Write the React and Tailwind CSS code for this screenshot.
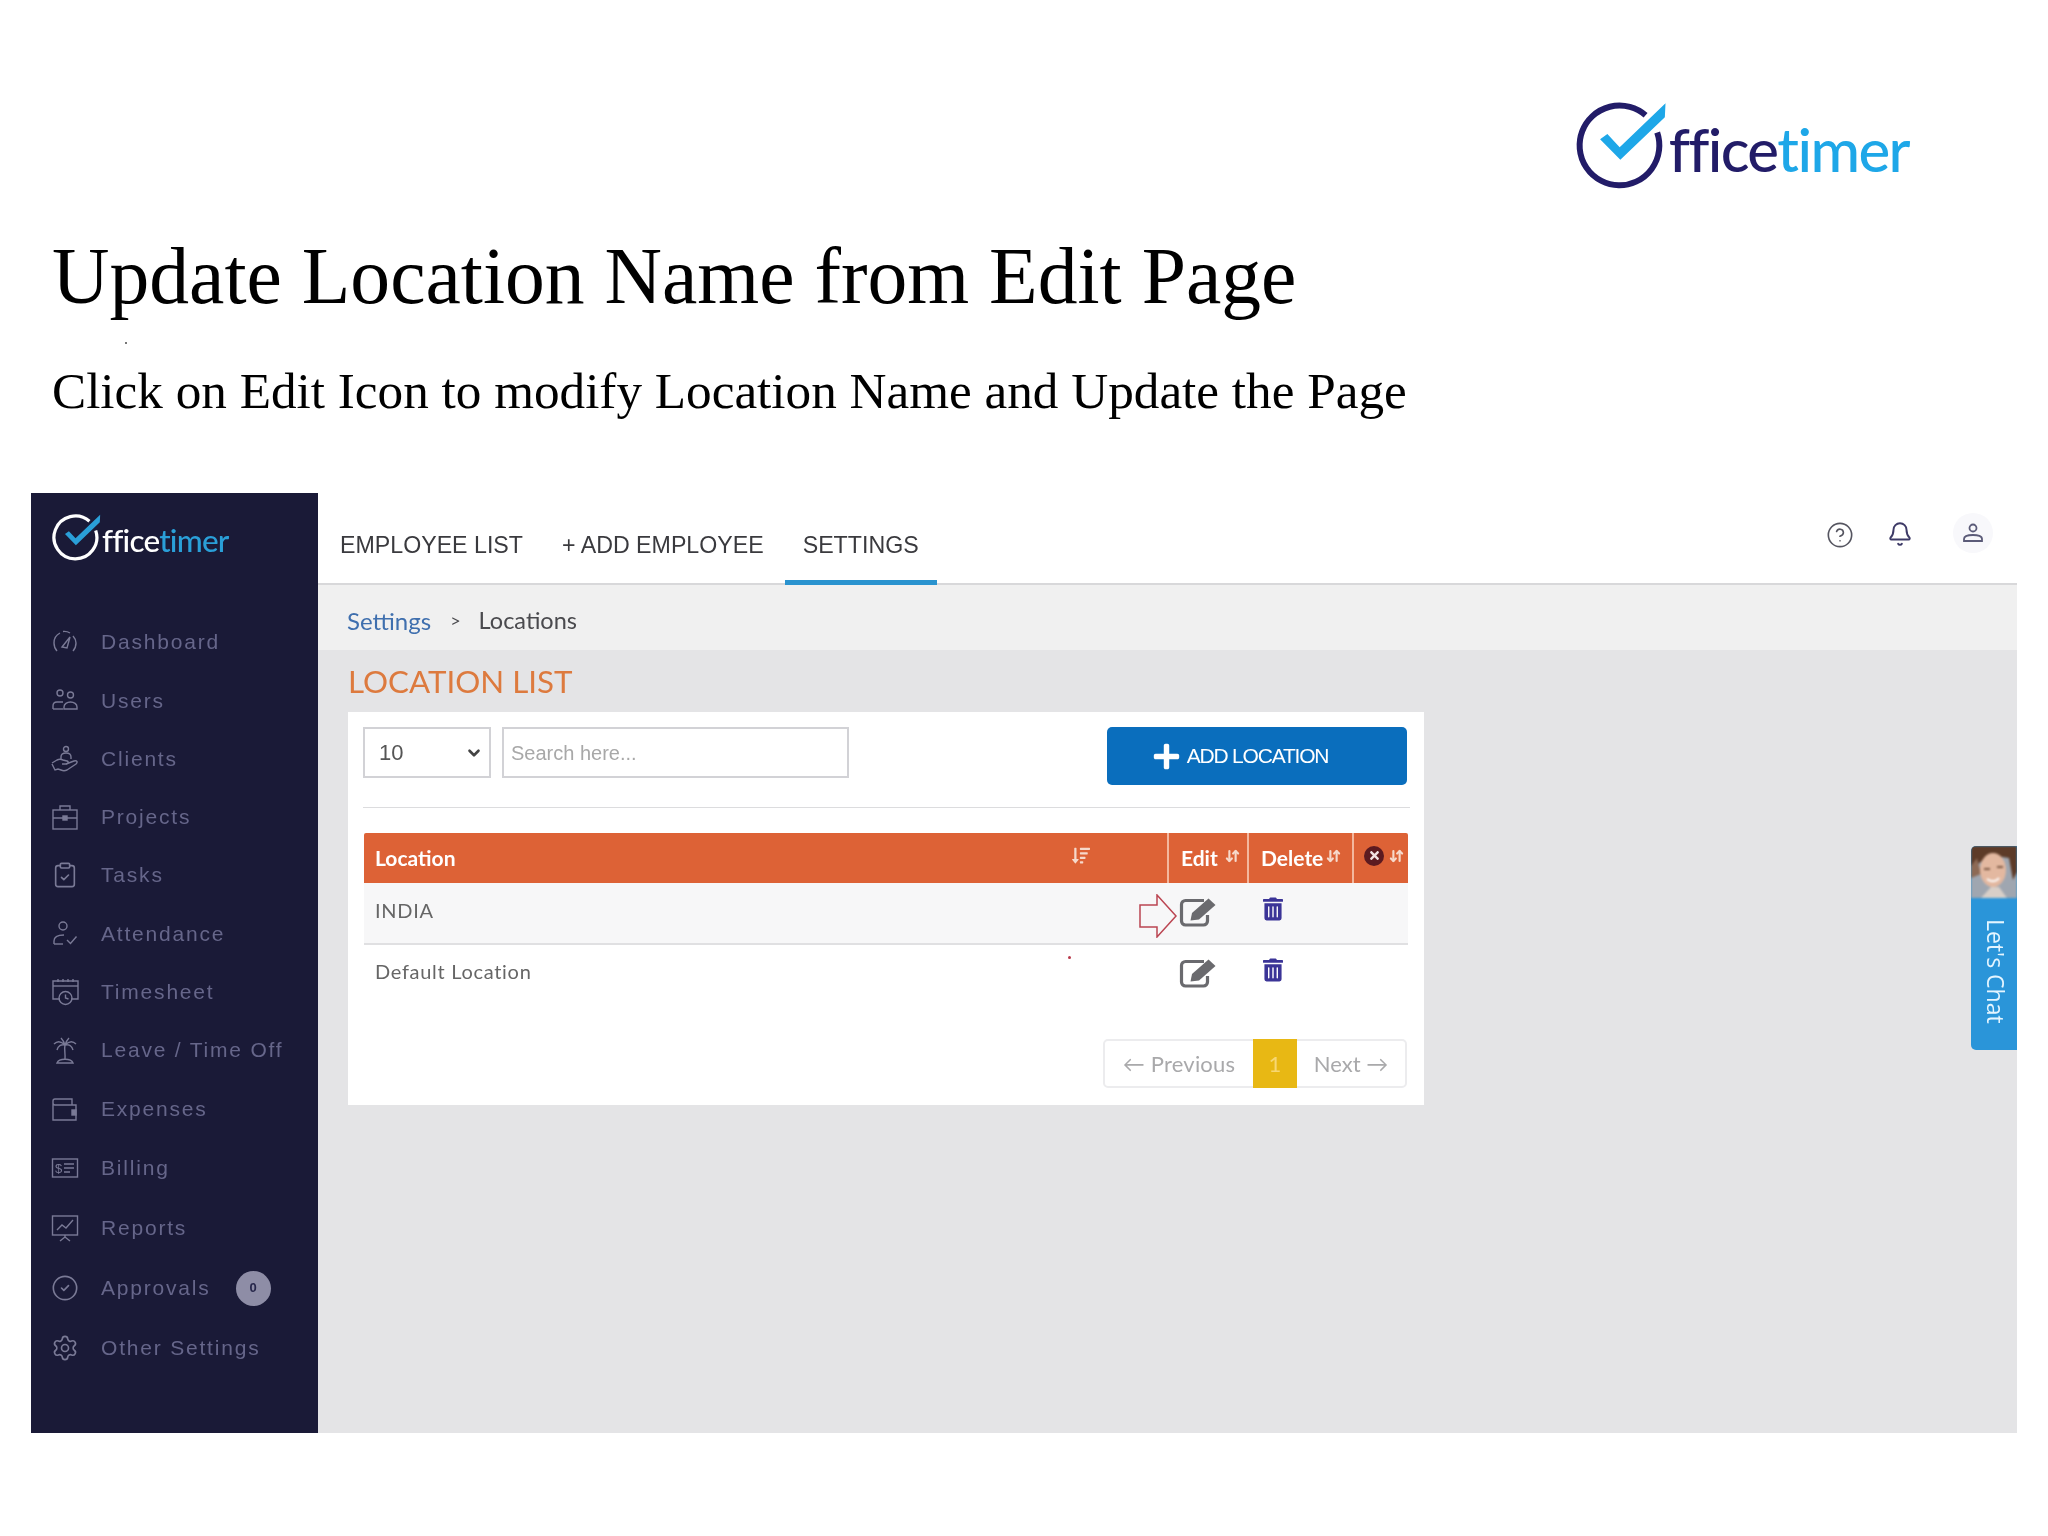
import { ArrowDownUp, Bell, ChevronDown, CircleCheck, CircleHelp, ClipboardCheck, Settings } from 'lucide-react'
import { FaPlus, FaSortAmountDown, FaTimes, FaTrashAlt } from 'react-icons/fa'

const LogoMark = ({ className, ring, tick }) => (
  <svg viewBox="225 120 285 280" className={className} fill="none">
    <path d="M440 166 A120 120 0 1 0 475 218" stroke={ring} strokeWidth="18" />
    <path d="M303 238 L325 222 L362 262 L500 130 L498 172 L364 300 Z" fill={tick} />
  </svg>
)

const NavSvg = ({ children }) => (
  <svg viewBox="0 0 28 28" className="w-7 h-7" fill="none" stroke="currentColor" strokeWidth="1.4">
    {children}
  </svg>
)

const GaugeIcon = () => (
  <NavSvg>
    <path d="M6 23A12 12 0 0 1 3 15 11 11 0 0 1 9 5" />
    <path d="M12 3.500A11 11 0 0 1 19 5" />
    <path d="M22 8a11 11 0 0 1 3 7 12 12 0 0 1-3 8" />
    <path d="M11 19L19 9 16 20z" />
  </NavSvg>
)

const UsersIcon = () => (
  <NavSvg>
    <circle cx="9" cy="7" r="3" />
    <circle cx="19.500" cy="9" r="3" />
    <path d="M2 23v-3c0-3 2-4 4-4h6" />
    <path d="M2 23h10" />
    <path d="M13 23v-2c0-3 3-5 6.500-5s6.500 2 6.500 5v2z" />
  </NavSvg>
)

const ClientsIcon = () => (
  <NavSvg>
    <circle cx="15" cy="4" r="2.500" />
    <path d="M10 14v-2c0-3 2-4 5-4s5 1 5 4v2" />
    <path d="M1 18l5-3c2-1 4-1 6 0l4 1c2 .5 1.500 3-1 3h-4" />
    <path d="M15 19l8-3c3-1 4 1 2 3l-9 6c-2 1-4 1-6 0l-3-1-3 1-3-6" />
  </NavSvg>
)

const ProjectsIcon = () => (
  <NavSvg>
    <rect x="2" y="7" width="24" height="19" />
    <path d="M9 7V3h10v4M2 15h24" />
    <rect x="12" y="13" width="4" height="4" fill="currentColor" />
  </NavSvg>
)

const AttendanceIcon = () => (
  <NavSvg>
    <circle cx="12" cy="7" r="4" />
    <path d="M3 25v-3c0-4 4-6 10-6" />
    <path d="M3 25h9" />
    <path d="M16 21l3.500 3.500 6-7" />
  </NavSvg>
)

const TimesheetIcon = () => (
  <NavSvg>
    <path d="M9 21H2V3h25v18h-7" />
    <path d="M2 8h25" />
    <path d="M7 1v3M12 1v3M17 1v3M22 1v3" />
    <circle cx="14.500" cy="20" r="6.500" />
    <path d="M14.500 16.500V20l3 1" />
  </NavSvg>
)

const PalmIcon = () => (
  <NavSvg>
    <path d="M14 23c.5-5-1-10 0-14" />
    <path d="M14 9C10 5 6 5 3 8M14 9c4-4 8-4 11-1M14 9c-4-1-7 1-8 5M14 9c4-1 7 1 8 5M14 9c-1-3-2-5-4-7M14 9c1-3 2-5 4-7" />
    <path d="M6 27c2-5 14-5 16 0z" />
  </NavSvg>
)

const WalletIcon = () => (
  <NavSvg>
    <path d="M2 6a2 2 0 0 1 2-2h17v6" />
    <path d="M2 6v19h23v-15H4a2 2 0 0 1-2-2" />
    <rect x="21" y="15" width="4" height="5" fill="currentColor" />
  </NavSvg>
)

const BillingIcon = () => (
  <NavSvg>
    <rect x="1.500" y="5" width="25" height="18" />
    <path d="M13 10h10M13 14h10M13 18h6" />
    <text x="4" y="19" fontSize="13" fill="currentColor" stroke="none" fontFamily="Liberation Sans">$</text>
  </NavSvg>
)

const ReportsIcon = () => (
  <NavSvg>
    <rect x="1.500" y="2" width="25" height="19" />
    <path d="M6 16l5-5 4 3 7-8" />
    <path d="M14 21v2M14 23l-5 4M14 23l5 4" />
  </NavSvg>
)

const navItems = [
  { label: 'Dashboard', icon: <GaugeIcon />, row: 'h-[58.25px]' },
  { label: 'Users', icon: <UsersIcon />, row: 'h-[58.25px]' },
  { label: 'Clients', icon: <ClientsIcon />, row: 'h-[58.25px]' },
  { label: 'Projects', icon: <ProjectsIcon />, row: 'h-[58.25px]' },
  { label: 'Tasks', icon: <ClipboardCheck className="w-7 h-7" strokeWidth={1.4} />, row: 'h-[58.25px]' },
  { label: 'Attendance', icon: <AttendanceIcon />, row: 'h-[58.25px]' },
  { label: 'Timesheet', icon: <TimesheetIcon />, row: 'h-[58.25px]' },
  { label: 'Leave / Time Off', icon: <PalmIcon />, row: 'h-[58.25px]' },
  { label: 'Expenses', icon: <WalletIcon />, row: 'h-[59px]' },
  { label: 'Billing', icon: <BillingIcon />, row: 'h-[60px]' },
  { label: 'Reports', icon: <ReportsIcon />, row: 'h-[60px]' },
  { label: 'Approvals', icon: <CircleCheck className="w-7 h-7" strokeWidth={1.4} />, row: 'h-[60px]', badge: '0' },
  { label: 'Other Settings', icon: <Settings className="w-7 h-7" strokeWidth={1.4} />, row: 'h-[60px]' },
]

const tabs = [
  { label: 'EMPLOYEE LIST' },
  { label: '+ ADD EMPLOYEE' },
  { label: 'SETTINGS', active: true },
]

const rows = ['INDIA', 'Default Location']

function SortArrows() {
  return <ArrowDownUp className="w-[15px] h-[18px] text-[#f6d9cb]" strokeWidth={3.4} />
}

function EditIcon() {
  return (
    <svg viewBox="0 0 38 30" className="w-[38px] h-[30px] text-[#6a6a6e]" fill="none">
      <path d="M25 3.500H6.500a4 4 0 0 0-4 4v16.500a4 4 0 0 0 4 4h18a4 4 0 0 0 4-4v-6" stroke="currentColor" strokeWidth="3.200" />
      <path d="M11.500 23.500L13 16 29.500 1.500l7 6.500L20 22.500z" fill="currentColor" />
    </svg>
  )
}

function Sidebar() {
  return (
    <aside className="w-[287px] shrink-0 bg-[#1a1a37]">
      <div className="h-[120px] pl-[20px] pt-[20px] flex items-start">
        <LogoMark className="w-[51px] h-[50px] shrink-0" ring="#ffffff" tick="#2a9fd8" />
        <span className="mt-[2px] font-['Lato',sans-serif] text-[31.5px] leading-[50px] tracking-[-0.8px] font-medium text-white">
          ffice<span className="text-[#2a9fd8]">timer</span>
        </span>
      </div>
      <nav className="flex flex-col">
        {navItems.map(item => (
          <div key={item.label} className={`${item.row} pl-[20px] flex items-center gap-[22px] text-[#7a7a96]`}>
            <span className="shrink-0">{item.icon}</span>
            <span className="font-['Liberation_Sans',sans-serif] text-[21px] tracking-[1.8px] text-[#66668a]">{item.label}</span>
            {item.badge && (
              <span className="ml-[3px] w-[35px] h-[35px] rounded-full bg-[#8e8da6] text-[#26264a] text-[13px] font-bold flex items-center justify-center font-['Liberation_Sans',sans-serif]">
                {item.badge}
              </span>
            )}
          </div>
        ))}
      </nav>
    </aside>
  )
}

function TopBar() {
  return (
    <header className="h-[92px] bg-white border-b-2 border-[#d8d8da] flex justify-between pl-[22px] pr-[24px]">
      <div className="flex h-[92px] gap-[39px] font-['Liberation_Sans',sans-serif] text-[23.2px] text-[#3a3a3e]">
        {tabs.map(tab => (
          <div key={tab.label} className={tab.active ? 'relative -ml-[18px] px-[18px] pt-[35px] border-b-[5px] border-[#2a93cf]' : 'pt-[35px]'}>
            {tab.label}
          </div>
        ))}
      </div>
      <div className="flex items-start pt-[20px] text-[#4a4a68]">
        <CircleHelp className="w-[28px] h-[28px] mt-[8px] text-[#555560]" strokeWidth={1.4} />
        <Bell className="w-[26px] h-[28px] ml-[33px] mt-[7px] text-[#3d3a66]" strokeWidth={1.8} />
        <div className="ml-[40px] w-[40px] h-[40px] rounded-full bg-[#f8f8fb] flex items-center justify-center text-[#5b5b78]">
          <svg viewBox="0 0 24 24" className="w-[24px] h-[24px]" fill="none" stroke="currentColor" strokeWidth="1.8">
            <circle cx="12" cy="7" r="3.500" />
            <path d="M3 20v-2c0-3 4-4 9-4s9 1 9 4v2z" />
          </svg>
        </div>
      </div>
    </header>
  )
}

function LocationCard() {
  return (
    <section className="relative w-[1076px] h-[393px] bg-white pt-[15px] px-[16px]">
      {/* Filters */}
      <div className="flex items-start gap-[11px] pr-[1px] font-['Liberation_Sans',sans-serif]">
        <div className="w-[128px] h-[51px] -ml-[1px] border-2 border-[#d2d2d6] flex items-center justify-between pl-[14px] pr-[6px] text-[22px] text-[#555]">
          10
          <ChevronDown className="w-[18px] h-[18px] text-[#444]" strokeWidth={3.5} />
        </div>
        <div className="w-[347px] h-[51px] border-2 border-[#d2d2d6] flex items-center pl-[7px] text-[20px] text-[#a8a8a8]">Search here...</div>
        <button className="ml-auto w-[300px] h-[58px] rounded-[5px] bg-[#0a6ebd] text-white flex items-center justify-center gap-[6px] pr-[34px] text-[21px] tracking-[-1.2px]">
          <FaPlus className="w-[29px] h-[29px]" />
          ADD LOCATION
        </button>
      </div>
      <div className="mt-[22px] -ml-[1px] -mr-[2px] h-[1px] bg-[#dcdcde]" />

      {/* Table */}
      <div className="mt-[25px] font-['Lato',sans-serif]">
        <div className="grid grid-cols-[803px_80px_105px_56px] h-[50px] bg-[#dd6236] rounded-t-[2px] text-white text-[21px] font-bold">
          <div className="pl-[11px] flex items-center justify-between pr-[77px]">
            Location
            <FaSortAmountDown className="w-[18px] h-[19px] -mt-[5px] text-[#f6d9cb]" />
          </div>
          <div className="border-l-2 border-[#f3b79e] pl-[12px] flex items-center justify-between pr-[7px]">
            Edit
            <span className="-mt-[5px]"><SortArrows /></span>
          </div>
          <div className="border-l-2 border-[#f3b79e] pl-[12px] flex items-center justify-between pr-[11px]">
            Delete
            <span className="-mt-[5px]"><SortArrows /></span>
          </div>
          <div className="border-l-2 border-[#f3b79e] pl-[10px] flex items-center gap-[5px]">
            <span className="-mt-[5px] w-[20px] h-[20px] rounded-full bg-[#5c1a20] flex items-center justify-center">
              <FaTimes className="w-[13px] h-[13px] text-[#f2e2e2]" />
            </span>
            <span className="-mt-[5px]"><SortArrows /></span>
          </div>
        </div>
        {rows.map((name, i) => (
          <div key={name} className={`grid grid-cols-[803px_80px_105px_56px] h-[62px] border-b-2 ${i === 0 ? 'bg-[#f7f7f8] border-[#e0e0e2] pt-[14px]' : 'bg-white border-transparent pt-[13px]'}`}>
            <div className="pl-[11px] text-[20px] leading-[26px] tracking-[0.7px] text-[#666]">{name}</div>
            <div className="pl-[12px]"><EditIcon /></div>
            <div className="pl-[16px]"><FaTrashAlt className="w-[20px] h-[24px] text-[#3b3497]" /></div>
            <div />
          </div>
        ))}
      </div>

      {/* Pagination */}
      <div className="mt-[32px] ml-auto mr-[1px] w-[304px] h-[49px] border-2 border-[#ececee] rounded-[5px] flex font-['Lato',sans-serif] text-[22px] text-[#a9a9ab]">
        <div className="w-[148px] flex items-center justify-center tracking-[0.2px]">← Previous</div>
        <div className="w-[44px] -my-[2px] bg-[#e8b814] text-[#f7d774] flex items-center justify-center">1</div>
        <div className="flex-1 flex items-center justify-center">Next →</div>
      </div>

      {/* callout arrow next to the first edit icon */}
      <svg viewBox="0 0 38 44" className="absolute left-[791px] top-[182px] w-[38px] h-[44px]" fill="none" stroke="#bb4552" strokeWidth="1.5">
        <path d="M1 11h17V1l19 21-19 21V33H1z" />
      </svg>
      <span className="absolute left-[720px] top-[244px] w-[3px] h-[3px] rounded-full bg-[#b8394a]" />
    </section>
  )
}

function ChatTab() {
  return (
    <div className="absolute right-0 top-[353px] w-[46px] h-[204px] flex flex-col rounded-l-[5px] overflow-hidden bg-[#2a95d9]">
      <svg viewBox="0 0 46 52" className="w-[46px] h-[52px] shrink-0 blur-[0.8px]">
        <rect width="46" height="52" fill="#9fa6b0" />
        <path d="M0 0h46v26l-4 8-4-22-20-3-12 10-6 6z" fill="#5d3b28" />
        <path d="M0 20l6-8 4 16-10 4z" fill="#8d6a55" />
        <ellipse cx="22" cy="24" rx="13" ry="17" fill="#e3b8a0" />
        <path d="M13 23h6M26 21h6" stroke="#5d3b28" strokeWidth="1.600" />
        <path d="M16 33c4 3 9 3 12-1" stroke="#ffffff" strokeWidth="2" fill="none" />
        <path d="M10 52l10-11h8l8 11z" fill="#d8cfc8" />
      </svg>
      <div className="flex-1 flex items-center justify-center pl-[4px] pb-[5px]">
        <span className="[writing-mode:vertical-rl] font-['Open_Sans',sans-serif] text-[23px] text-[#e4f5ff]">Let's Chat</span>
      </div>
    </div>
  )
}

export default function App() {
  return (
    <div className="relative w-[2048px] h-[1536px] bg-white overflow-hidden font-['Liberation_Serif',serif] text-black">
      {/* Slide header */}
      <div className="h-[230px] flex items-start justify-end pr-[139px] pt-[100px]">
        <div className="flex items-start blur-[0.4px]">
          <LogoMark className="w-[95px] h-[93px] shrink-0" ring="#221c68" tick="#1ea7e8" />
          <span className="mt-[3px] font-['Lato',sans-serif] text-[60px] leading-[93px] tracking-[-1.6px] font-medium text-[#221c68]">
            ffice<span className="text-[#1ea7e8]">timer</span>
          </span>
        </div>
      </div>
      <h1 className="pl-[52px] text-[79.6px] leading-[92px] font-normal">Update Location Name from Edit Page</h1>
      <p className="pl-[52px] mt-[39px] text-[51.2px] leading-[60px]">Click on Edit Icon to modify Location Name and Update the Page</p>
      <span className="absolute left-[125px] top-[342px] w-[2px] h-[2px] bg-[#777]" />

      {/* App screenshot */}
      <div className="mt-[72px] ml-[31px] w-[1986px] h-[940px] flex blur-[0.5px]">
        <Sidebar />
        <main className="relative flex-1 bg-[#e4e4e6]">
          <TopBar />
          <div className="h-[65px] bg-[#f0f0f0] flex items-center pl-[29px] pt-[6px] font-['Lato',sans-serif] text-[24px] text-[#4a4a4e]">
            <span className="text-[#3f6fae]">Settings</span>
            <span className="ml-[19px] text-[18px]">&gt;</span>
            <span className="ml-[18px] text-[23.5px]">Locations</span>
          </div>
          <div className="pl-[30px]">
            <h2 className="h-[62px] flex items-center font-['Lato',sans-serif] text-[31.3px] text-[#dd7a3e]">LOCATION LIST</h2>
            <LocationCard />
          </div>
          <ChatTab />
        </main>
      </div>
    </div>
  )
}
